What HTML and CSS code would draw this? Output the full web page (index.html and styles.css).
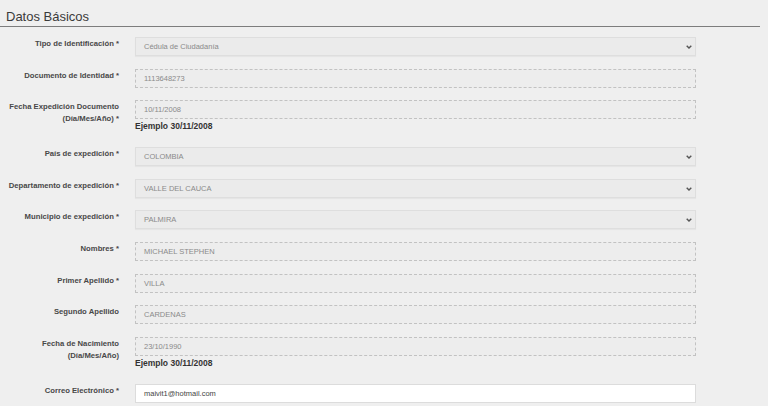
FILE: index.html
```html
<!DOCTYPE html>
<html lang="es">
<head>
<meta charset="utf-8">
<title>Datos Básicos</title>
<link rel="stylesheet" href="styles.css">
</head>
<body>
<div class="page">
  <h2 class="section-title">Datos Básicos</h2>
  <form class="form">
    <div class="row">
      <label class="label">Tipo de Identificación *</label>
      <div class="field"><div class="control select">Cédula de Ciudadanía<svg class="chev" viewBox="0 0 6 4" width="6" height="4"><polyline points="0.7,0.7 3,3 5.3,0.7"/></svg></div></div>
    </div>
    <div class="row">
      <label class="label">Documento de Identidad *</label>
      <div class="field"><div class="control readonly">1113648273</div></div>
    </div>
    <div class="row">
      <label class="label">Fecha Expedición Documento (Día/Mes/Año) *</label>
      <div class="field"><div class="control readonly">10/11/2008</div><div class="hint">Ejemplo 30/11/2008</div></div>
    </div>
    <div class="row">
      <label class="label">País de expedición *</label>
      <div class="field"><div class="control select">COLOMBIA<svg class="chev" viewBox="0 0 6 4" width="6" height="4"><polyline points="0.7,0.7 3,3 5.3,0.7"/></svg></div></div>
    </div>
    <div class="row">
      <label class="label">Departamento de expedición *</label>
      <div class="field"><div class="control select">VALLE DEL CAUCA<svg class="chev" viewBox="0 0 6 4" width="6" height="4"><polyline points="0.7,0.7 3,3 5.3,0.7"/></svg></div></div>
    </div>
    <div class="row">
      <label class="label">Municipio de expedición *</label>
      <div class="field"><div class="control select">PALMIRA<svg class="chev" viewBox="0 0 6 4" width="6" height="4"><polyline points="0.7,0.7 3,3 5.3,0.7"/></svg></div></div>
    </div>
    <div class="row">
      <label class="label">Nombres *</label>
      <div class="field"><div class="control readonly">MICHAEL STEPHEN</div></div>
    </div>
    <div class="row">
      <label class="label">Primer Apellido *</label>
      <div class="field"><div class="control readonly">VILLA</div></div>
    </div>
    <div class="row">
      <label class="label">Segundo Apellido</label>
      <div class="field"><div class="control readonly">CARDENAS</div></div>
    </div>
    <div class="row">
      <label class="label">Fecha de Nacimiento (Día/Mes/Año)</label>
      <div class="field"><div class="control readonly">23/10/1990</div><div class="hint">Ejemplo 30/11/2008</div></div>
    </div>
    <div class="row">
      <label class="label">Correo Electrónico *</label>
      <div class="field"><div class="control editable">maivit1@hotmail.com</div></div>
    </div>
  </form>
</div>
</body>
</html>
```

FILE: styles.css
```css
* { box-sizing: border-box; }
html, body {
  margin: 0;
  padding: 0;
  background: #efefef;
  font-family: "Liberation Sans", Arial, sans-serif;
  overflow: hidden;
}
.page {
  width: 768px;
  height: 406px;
  overflow: hidden;
}
.section-title {
  margin: 0 8px 0 0;
  padding: 9px 0 2px 6px;
  font-size: 13px;
  line-height: 15px;
  font-weight: normal;
  color: #3a3a3a;
  border-bottom: 1px solid #7d7d7d;
}
.form {
  margin: 10px 0 0 0;
}
.row {
  display: grid;
  grid-template-columns: 125px 561px;
  column-gap: 10px;
  margin-bottom: 12.6px;
}
.label {
  text-align: right;
  padding-right: 6px;
  padding-top: 1px;
  font-size: 7.7px;
  line-height: 12px;
  font-weight: bold;
  color: #484848;
}
.control {
  position: relative;
  height: 19px;
  display: flex;
  align-items: center;
  padding-left: 8px;
  font-size: 7.5px;
  color: #8a8a8a;
  background: #ededed;
}
.readonly {
  border: 1px dashed #c2c2c2;
}
.select {
  border: 1px solid #dedede;
  background: #ebebeb;
  box-shadow: 0 1px 1px rgba(0,0,0,0.04);
}
.editable {
  border: 1px solid #dcdcdc;
  background: #fff;
  color: #444;
}
.chev {
  position: absolute;
  right: 3px;
  top: 7px;
  fill: none;
  stroke: #555;
  stroke-width: 1.4;
}
.hint {
  font-size: 8.5px;
  line-height: 15.4px;
  font-weight: bold;
  color: #333;
}
```
